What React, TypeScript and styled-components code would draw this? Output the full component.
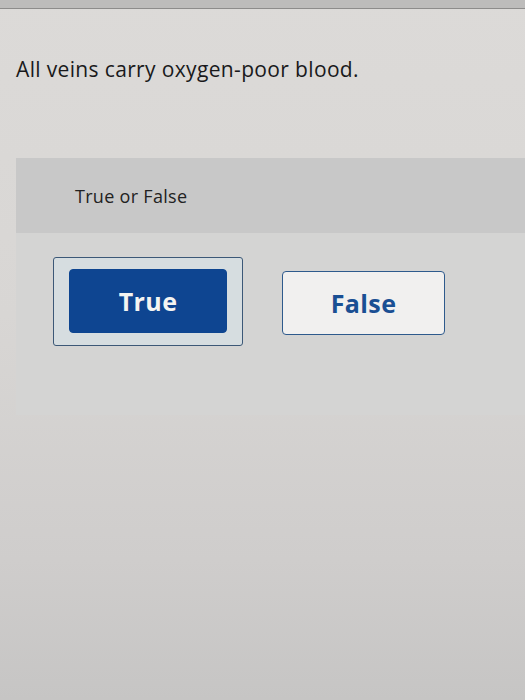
import React, { useState } from 'react';
import styled, { createGlobalStyle } from 'styled-components';

const GlobalStyle = createGlobalStyle`
  html, body {
    margin: 0;
    padding: 0;
  }
  body {
    font-family: 'Open Sans', 'Noto Sans', 'Liberation Sans', sans-serif;
    color: #1d1d1f;
  }
`;

const Page = styled.div`
  min-height: 700px;
  width: 525px;
  overflow: hidden;
  background: linear-gradient(180deg, #dcdad8 0%, #d8d6d4 45%, #cfcdcc 80%, #c6c5c4 100%);
`;

const ScreenEdge = styled.div`
  height: 8px;
  background: #bdbcbb;
  border-bottom: 1px solid #8d8c8b;
`;

const Question = styled.p`
  margin: 0;
  padding: 47px 16px 0 16px;
  font-size: 21px;
  line-height: 26px;
  letter-spacing: 0.35px;
  color: #19191b;
`;

const Panel = styled.section`
  margin: 76px -20px 0 16px;
  background: #d4d4d3;
  height: 257px;
`;

const PanelHeader = styled.div`
  height: 75px;
  padding: 26px 0 0 59px;
  box-sizing: border-box;
  background: #c8c8c8;
  font-size: 18px;
  line-height: 24px;
  letter-spacing: 0.3px;
  color: #222;
`;

const Choices = styled.div`
  display: flex;
  align-items: center;
  gap: 39px;
  padding: 24px 0 0 37px;
`;

const FocusRing = styled.div<{ $active: boolean }>`
  display: flex;
  padding: ${p => (p.$active ? '11px 15px 12px 15px' : '3px 0 0 0')};
  border: ${p => (p.$active ? '1.5px solid #3c5877' : '0')};
  border-radius: 3px;
  background: ${p => (p.$active ? '#d6dde0' : 'transparent')};
`;

const ChoiceButton = styled.button<{ $selected: boolean }>`
  width: ${p => (p.$selected ? '158px' : '163px')};
  height: 64px;
  border-radius: 4px;
  border: 1.5px solid ${p => (p.$selected ? '#0d4590' : '#2e5a8c')};
  background: ${p => (p.$selected ? '#0e4591' : '#f1f0ef')};
  color: ${p => (p.$selected ? '#f4f4f2' : '#1a4f93')};
  font-family: 'Open Sans', 'Noto Sans', 'Liberation Sans', sans-serif;
  font-size: 25px;
  font-weight: 700;
  letter-spacing: 0.4px;
  cursor: pointer;
  padding: 0;
`;

const App: React.FC = () => {
  const [answer, setAnswer] = useState<'True' | 'False'>('True');
  const options: Array<'True' | 'False'> = ['True', 'False'];

  return (
    <>
      <GlobalStyle />
      <Page>
        <ScreenEdge />
        <Question>All veins carry oxygen-poor blood.</Question>
        <Panel>
          <PanelHeader>True or False</PanelHeader>
          <Choices>
            {options.map(opt => (
              <FocusRing key={opt} $active={answer === opt}>
                <ChoiceButton $selected={answer === opt} onClick={() => setAnswer(opt)}>
                  {opt}
                </ChoiceButton>
              </FocusRing>
            ))}
          </Choices>
        </Panel>
      </Page>
    </>
  );
};

export default App;
